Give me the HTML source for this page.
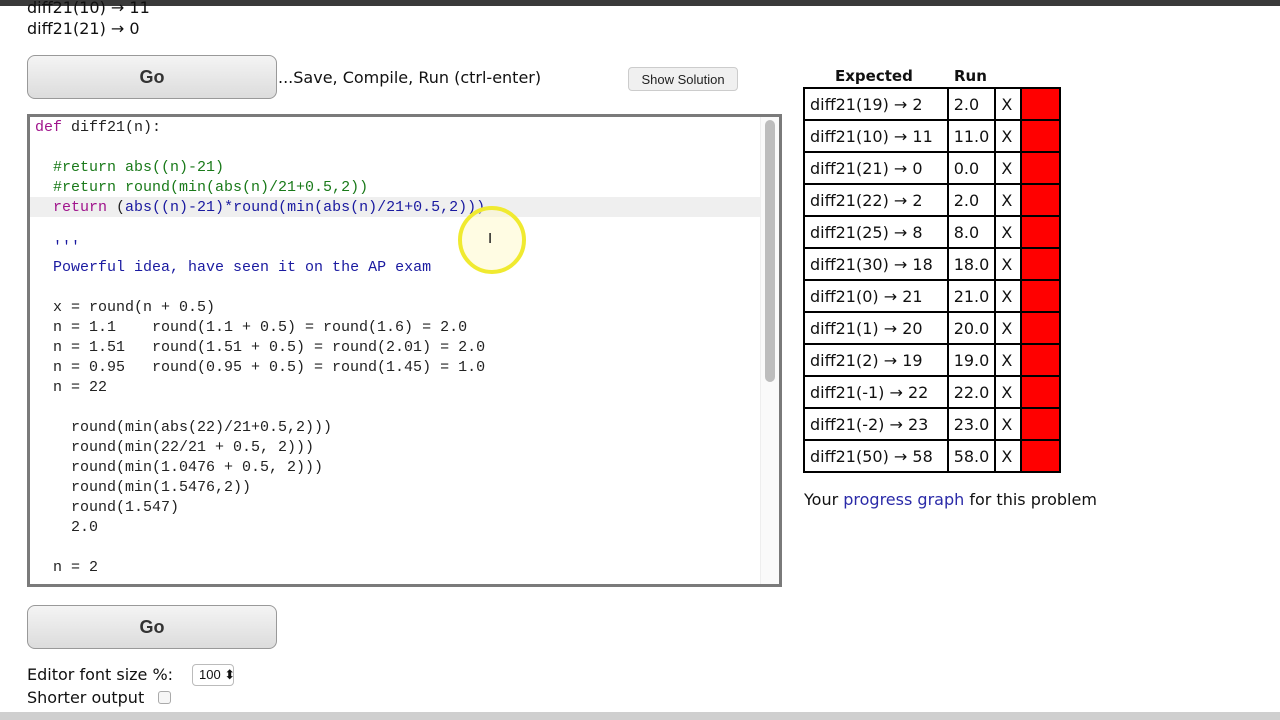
<!DOCTYPE html>
<html><head><meta charset="utf-8"><style>
*{margin:0;padding:0;box-sizing:border-box}
body{width:1280px;height:720px;overflow:hidden;background:#fff;font-family:"Liberation Sans",sans-serif;color:#111;position:relative}
.abs{position:absolute}
.topbar{left:0;top:0;width:1280px;height:6px;background:#3a3a3a}
.t{font-family:"DejaVu Sans",sans-serif;font-size:16px;white-space:nowrap}
.go{width:250px;height:44px;border:1px solid #999;border-radius:8px;background:linear-gradient(#f4f4f4,#dcdcdc);font-weight:bold;font-size:18px;color:#333;display:flex;align-items:center;justify-content:center}
.sol{left:628px;top:67px;width:110px;height:24px;border:1px solid #ccc;border-radius:4px;background:#f0f0f0;font-size:13px;display:flex;align-items:center;justify-content:center;color:#222}
.ed{left:27px;top:114px;width:755px;height:473px;border:3px solid #7a7a7a;background:#fff;overflow:hidden}
.code{font-family:"Liberation Mono",monospace;font-size:15px;line-height:20px;white-space:pre;position:absolute;left:5px;top:1px;color:#222}
.cl{position:absolute;left:0;top:80px;width:735px;height:20px;background:#efefef}
.sb{left:765px;top:120px;width:10px;height:262px;background:#bdbdbd;border-radius:5px}
.sbt{left:760px;top:117px;width:19px;height:467px;background:#fafafa;border-left:1px solid #eee}
.k{color:#a0148c}.c{color:#1a7a1a}.s{color:#1a1aa0}
table{border-collapse:collapse;font-family:"DejaVu Sans",sans-serif;font-size:16px}
td{border:2px solid #000;height:32px;padding:0 5px;white-space:nowrap}
td.r{background:#f00;width:40px;padding:0}
.sel{left:192px;top:664px;width:42px;height:22px;border:1px solid #bbb;border-radius:4px;font-size:13px;padding-left:6px;line-height:20px;white-space:nowrap;overflow:hidden}
.cb{left:158px;top:691px;width:13px;height:13px;border:1px solid #aaa;border-radius:3px;background:#f6f6f6}
.bot{left:0;top:712px;width:1280px;height:8px;background:#cfcfcf}
</style></head><body>
<div class="abs topbar"></div>
<div class="abs t" style="left:27px;top:-2px">diff21(10) → 11</div>
<div class="abs t" style="left:27px;top:19px">diff21(21) → 0</div>
<div class="abs go" style="left:27px;top:55px">Go</div>
<div class="abs t" style="left:278px;top:68px">...Save, Compile, Run (ctrl-enter)</div>
<div class="abs sol">Show Solution</div>
<div class="abs ed">
<div class="cl"></div>
<div class="code"><span class="k">def</span> diff21(n):

  <span class="c">#return abs((n)-21)</span>
  <span class="c">#return round(min(abs(n)/21+0.5,2))</span>
  <span class="k">return</span> (<span class="s">abs((n)-21)*round(min(abs(n)/21+0.5,2)))</span>

  <span class="s">'''</span>
  <span class="s">Powerful idea, have seen it on the AP exam</span>

  x = round(n + 0.5)
  n = 1.1    round(1.1 + 0.5) = round(1.6) = 2.0
  n = 1.51   round(1.51 + 0.5) = round(2.01) = 2.0
  n = 0.95   round(0.95 + 0.5) = round(1.45) = 1.0
  n = 22

    round(min(abs(22)/21+0.5,2)))
    round(min(22/21 + 0.5, 2)))
    round(min(1.0476 + 0.5, 2)))
    round(min(1.5476,2))
    round(1.547)
    2.0

  n = 2</div>
</div>
<div class="abs sbt"></div>
<div class="abs sb"></div>
<div class="abs" style="left:458px;top:206px;width:68px;height:68px;border-radius:50%;border:4px solid #f0ea30;background:rgba(255,250,200,.5)"></div>
<div class="abs" style="left:488px;top:230px;font-size:15px">I</div>
<div class="abs" style="left:835px;top:67px;font-family:'DejaVu Sans',sans-serif;font-weight:bold;font-size:15px">Expected</div>
<div class="abs" style="left:954px;top:67px;font-family:'DejaVu Sans',sans-serif;font-weight:bold;font-size:15px">Run</div>
<table class="abs" style="left:803px;top:87px;width:258px">
<tr><td style="width:144px">diff21(19) → 2</td><td style="width:47px">2.0</td><td style="width:26px">X</td><td class="r"></td></tr>
<tr><td>diff21(10) → 11</td><td>11.0</td><td>X</td><td class="r"></td></tr>
<tr><td>diff21(21) → 0</td><td>0.0</td><td>X</td><td class="r"></td></tr>
<tr><td>diff21(22) → 2</td><td>2.0</td><td>X</td><td class="r"></td></tr>
<tr><td>diff21(25) → 8</td><td>8.0</td><td>X</td><td class="r"></td></tr>
<tr><td>diff21(30) → 18</td><td>18.0</td><td>X</td><td class="r"></td></tr>
<tr><td>diff21(0) → 21</td><td>21.0</td><td>X</td><td class="r"></td></tr>
<tr><td>diff21(1) → 20</td><td>20.0</td><td>X</td><td class="r"></td></tr>
<tr><td>diff21(2) → 19</td><td>19.0</td><td>X</td><td class="r"></td></tr>
<tr><td>diff21(-1) → 22</td><td>22.0</td><td>X</td><td class="r"></td></tr>
<tr><td>diff21(-2) → 23</td><td>23.0</td><td>X</td><td class="r"></td></tr>
<tr><td>diff21(50) → 58</td><td>58.0</td><td>X</td><td class="r"></td></tr>
</table>
<div class="abs t" style="left:804px;top:490px">Your <span style="color:#2a2aa8">progress graph</span> for this problem</div>
<div class="abs go" style="left:27px;top:605px">Go</div>
<div class="abs t" style="left:27px;top:665px">Editor font size %:</div>
<div class="abs sel">100 ⬍</div>
<div class="abs t" style="left:27px;top:688px">Shorter output</div>
<div class="abs cb"></div>
<div class="abs bot"></div>
</body></html>
